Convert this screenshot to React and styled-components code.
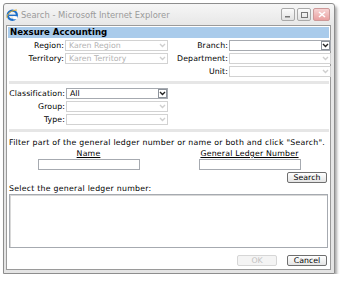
import React from 'react'
import styled, { createGlobalStyle } from 'styled-components'

const GlobalStyle = createGlobalStyle`
html, body {
  margin: 0;
  padding: 0;
  background: #ffffff;
}
body {
  font-family: 'DejaVu Sans', Verdana, sans-serif;
  font-size: 7.8px;
  color: #000;
}
`

const Window = styled.div`
  margin: 3px 0 0 3px;
  width: 332px;
  height: 271px;
  border: 1px solid #8d8d8d;
  border-radius: 3px 3px 0 0;
  background: linear-gradient(#f6f6f6, #e8e8e8 20px, #e4e4e4);
  box-shadow: 2px 3px 3px rgba(0, 0, 0, 0.35);
  display: flex;
  flex-direction: column;
  box-sizing: border-box;
`

const TitleBar = styled.div`
  height: 21px;
  display: flex;
  align-items: center;
  padding: 0 4px 0 2px;
`

const TitleText = styled.span`
  flex: 1;
  margin-left: 3px;
  font-size: 8.4px;
  color: #9a9a9a;
`

const WinButtons = styled.div`
  display: flex;
  gap: 2px;
`

const WinButton = styled.div`
  width: ${p => (p.close ? '15px' : '12px')};
  height: 11px;
  border: 1px solid ${p => (p.close ? '#c99' : '#a9a9a9')};
  border-radius: 2px;
  background: ${p =>
    p.close
      ? 'linear-gradient(#f7d4d4, #e9a0a0)'
      : 'linear-gradient(#fbfbfb, #e2e2e2)'};
  display: grid;
  place-items: center;
`

const Client = styled.div`
  flex: 1;
  margin: 0 3px 3px 2px;
  border: 1px solid #9a9a9a;
  background: #fff;
  padding: 0 1px;
  display: flex;
  flex-direction: column;
`

const HeaderBar = styled.div`
  margin-top: 1px;
  height: 11px;
  line-height: 11px;
  background: #a9cbeb;
  font-weight: bold;
  font-size: 8.6px;
  padding-left: 2px;
`

const FieldGrid = styled.div`
  display: grid;
  grid-template-columns: ${p => p.cols};
  row-gap: 2px;
  align-items: center;
  margin-top: ${p => p.top || '0'};
`

const Label = styled.div`
  text-align: right;
  padding-right: 1px;
  white-space: nowrap;
  letter-spacing: 0.1px;
`

const SelectBox = styled.div`
  height: 11px;
  box-sizing: border-box;
  border: 1px solid ${p => (p.disabled ? '#d2d2d2' : '#a6aab0')};
  display: flex;
  align-items: center;
  color: ${p => (p.disabled ? '#b3b3b3' : '#000')};
  background: #fff;
`

const SelectValue = styled.span`
  flex: 1;
  padding-left: 3px;
  white-space: nowrap;
  overflow: hidden;
`

const ArrowBox = styled.div`
  width: 9px;
  height: 9px;
  box-sizing: border-box;
  border: 1px solid ${p => (p.disabled ? 'transparent' : '#8d939b')};
  display: grid;
  place-items: center;
`

const Divider = styled.div`
  height: 3px;
  background: #e6e6e6;
  margin: ${p => p.m};
`

const Hint = styled.div`
  margin: ${p => p.m};
  padding-left: 1px;
  white-space: nowrap;
  letter-spacing: 0.25px;
`

const SearchGrid = styled.div`
  display: grid;
  grid-template-columns: 161px 161px;
  justify-items: center;
  row-gap: 1px;
`

const Caption = styled.div`
  text-decoration: underline;
  letter-spacing: 0.2px;
`

const TextInput = styled.div`
  width: 102px;
  height: 11px;
  box-sizing: border-box;
  border: 1px solid #a6aab0;
`

const ButtonRow = styled.div`
  display: flex;
  justify-content: flex-end;
  gap: 10px;
  padding-right: 2px;
  margin-top: ${p => p.top};
`

const Button = styled.div`
  width: 40px;
  height: 11px;
  box-sizing: border-box;
  border: 1px solid ${p => (p.disabled ? '#d6d6d6' : '#6f6f6f')};
  border-radius: 2px;
  background: ${p => (p.disabled ? '#f4f4f4' : 'linear-gradient(#ffffff, #e4e4e4)')};
  color: ${p => (p.disabled ? '#c2c2c2' : '#000')};
  display: grid;
  place-items: center;
  line-height: 1;
`

const ListBox = styled.div`
  margin: 1px 1px 0 1px;
  height: 52px;
  border: 1px solid #a6aab0;
  box-shadow: inset 1px 1px 0 #d8d8d8;
`

const Chevron = ({ color }) => (
  <svg width="7" height="5" viewBox="0 0 7 5">
    <path d="M1 1 L3.5 3.5 L6 1" fill="none" stroke={color} strokeWidth="1.4" />
  </svg>
)

const Select = ({ value, disabled }) => (
  <SelectBox disabled={disabled}>
    <SelectValue>{value}</SelectValue>
    <ArrowBox disabled={disabled}>
      <Chevron color={disabled ? '#cfcfcf' : '#222'} />
    </ArrowBox>
  </SelectBox>
)

const IEIcon = () => (
  <svg width="12" height="12" viewBox="0 0 12 12">
    <circle cx="6.3" cy="6.3" r="4.6" fill="none" stroke="#1e6fc8" strokeWidth="2.2" />
    <rect x="3" y="5.6" width="7" height="1.4" fill="#1e6fc8" />
    <rect x="7.2" y="7.3" width="4" height="3" fill="#fff" />
    <path d="M1 9 C0 5 6 1 11 1" fill="none" stroke="#e6b230" strokeWidth="1" />
  </svg>
)

export default function App() {
  return (
    <>
      <GlobalStyle />
      <Window>
        <TitleBar>
          <IEIcon />
          <TitleText>Search - Microsoft Internet Explorer</TitleText>
          <WinButtons>
            <WinButton>
              <svg width="6" height="6" viewBox="0 0 6 6"><rect x="0" y="4" width="5" height="1.5" fill="#777" /></svg>
            </WinButton>
            <WinButton>
              <svg width="7" height="6" viewBox="0 0 7 6"><rect x="0.5" y="0.5" width="6" height="5" fill="none" stroke="#777" /></svg>
            </WinButton>
            <WinButton close>
              <svg width="8" height="7" viewBox="0 0 8 7"><path d="M1 1 L7 6 M7 1 L1 6" stroke="#fff" strokeWidth="1.6" /></svg>
            </WinButton>
          </WinButtons>
        </TitleBar>
        <Client>
          <HeaderBar>Nexsure Accounting</HeaderBar>
          <FieldGrid cols="57px 103px 61px 102px" top="2px">
            <Label>Region:</Label>
            <Select value="Karen Region" disabled />
            <Label>Branch:</Label>
            <Select value="" />
            <Label>Territory:</Label>
            <Select value="Karen Territory" disabled />
            <Label>Department:</Label>
            <Select value="" disabled />
            <div />
            <div />
            <Label>Unit:</Label>
            <Select value="" disabled />
          </FieldGrid>
          <Divider m="4px 0 0 1px" />
          <FieldGrid cols="58px 102px" top="4px">
            <Label>Classification:</Label>
            <Select value="All" />
            <Label>Group:</Label>
            <Select value="" disabled />
            <Label>Type:</Label>
            <Select value="" disabled />
          </FieldGrid>
          <Divider m="4px 0 0 1px" />
          <Hint m="6px 0 2px 0">Filter part of the general ledger number or name or both and click "Search".</Hint>
          <SearchGrid>
            <Caption>Name</Caption>
            <Caption>General Ledger Number</Caption>
            <TextInput />
            <TextInput />
          </SearchGrid>
          <ButtonRow top="2px">
            <Button>Search</Button>
          </ButtonRow>
          <Hint m="1px 0 0 0">Select the general ledger number:</Hint>
          <ListBox />
          <ButtonRow top="7px">
            <Button disabled>OK</Button>
            <Button>Cancel</Button>
          </ButtonRow>
        </Client>
      </Window>
    </>
  )
}
